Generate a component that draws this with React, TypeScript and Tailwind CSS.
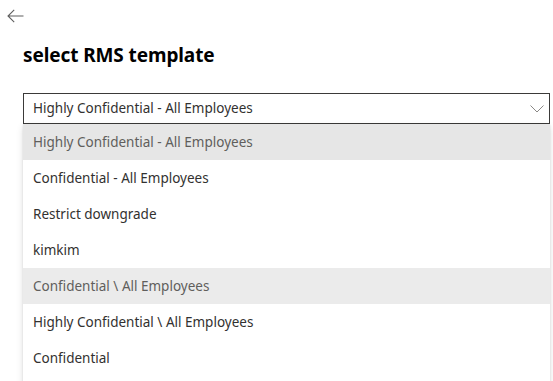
import { useState } from "react";

const templates = [
  "Highly Confidential - All Employees",
  "Confidential - All Employees",
  "Restrict downgrade",
  "kimkim",
  "Confidential \\ All Employees",
  "Highly Confidential \\ All Employees",
  "Confidential",
];

const App = () => {
  const [selected] = useState(templates[0]);
  const hovered = 4;

  return (
    <div className="min-h-screen bg-white font-['Noto_Sans',sans-serif] text-[#323130] overflow-hidden">
      <div className="pl-[7px] pt-[9px] h-[22px]">
        <svg width="17" height="14" viewBox="0 0 17 14" fill="none" stroke="#5f5f5f" strokeWidth="1.1">
          <path d="M16.5 7H1M7.2 0.8L1 7l6.2 6.2" />
        </svg>
      </div>

      <h1 className="ml-[23px] mt-[20px] text-[19px] leading-[26px] font-bold text-black tracking-[-0.1px]">
        select RMS template
      </h1>

      <div className="ml-[23px] mr-[3px] mt-[25px]">
        <div className="h-[31px] border border-[#3b3a39] flex items-center justify-between pl-[9px] pr-[5px] bg-white">
          <span className="text-[13.5px]">{selected}</span>
          <svg width="14" height="8" viewBox="0 0 14 8" fill="none" stroke="#8a8886" strokeWidth="1">
            <path d="M0.5 0.5L7 7l6.5-6.5" />
          </svg>
        </div>

        <ul className="bg-white shadow-[0_3px_7px_rgba(0,0,0,0.13),0_0.6px_1.8px_rgba(0,0,0,0.11)] pb-[20px]">
          {templates.map((t, i) => (
            <li
              key={t}
              className={
                "h-[36px] flex items-center px-[10px] text-[13.5px] " +
                (t === selected
                  ? "bg-[#e6e6e6] text-[#605e5c]"
                  : i === hovered
                  ? "bg-[#ebebeb] text-[#605e5c]"
                  : "text-[#323130]")
              }
            >
              {t}
            </li>
          ))}
        </ul>
      </div>
    </div>
  );
};

export default App;
